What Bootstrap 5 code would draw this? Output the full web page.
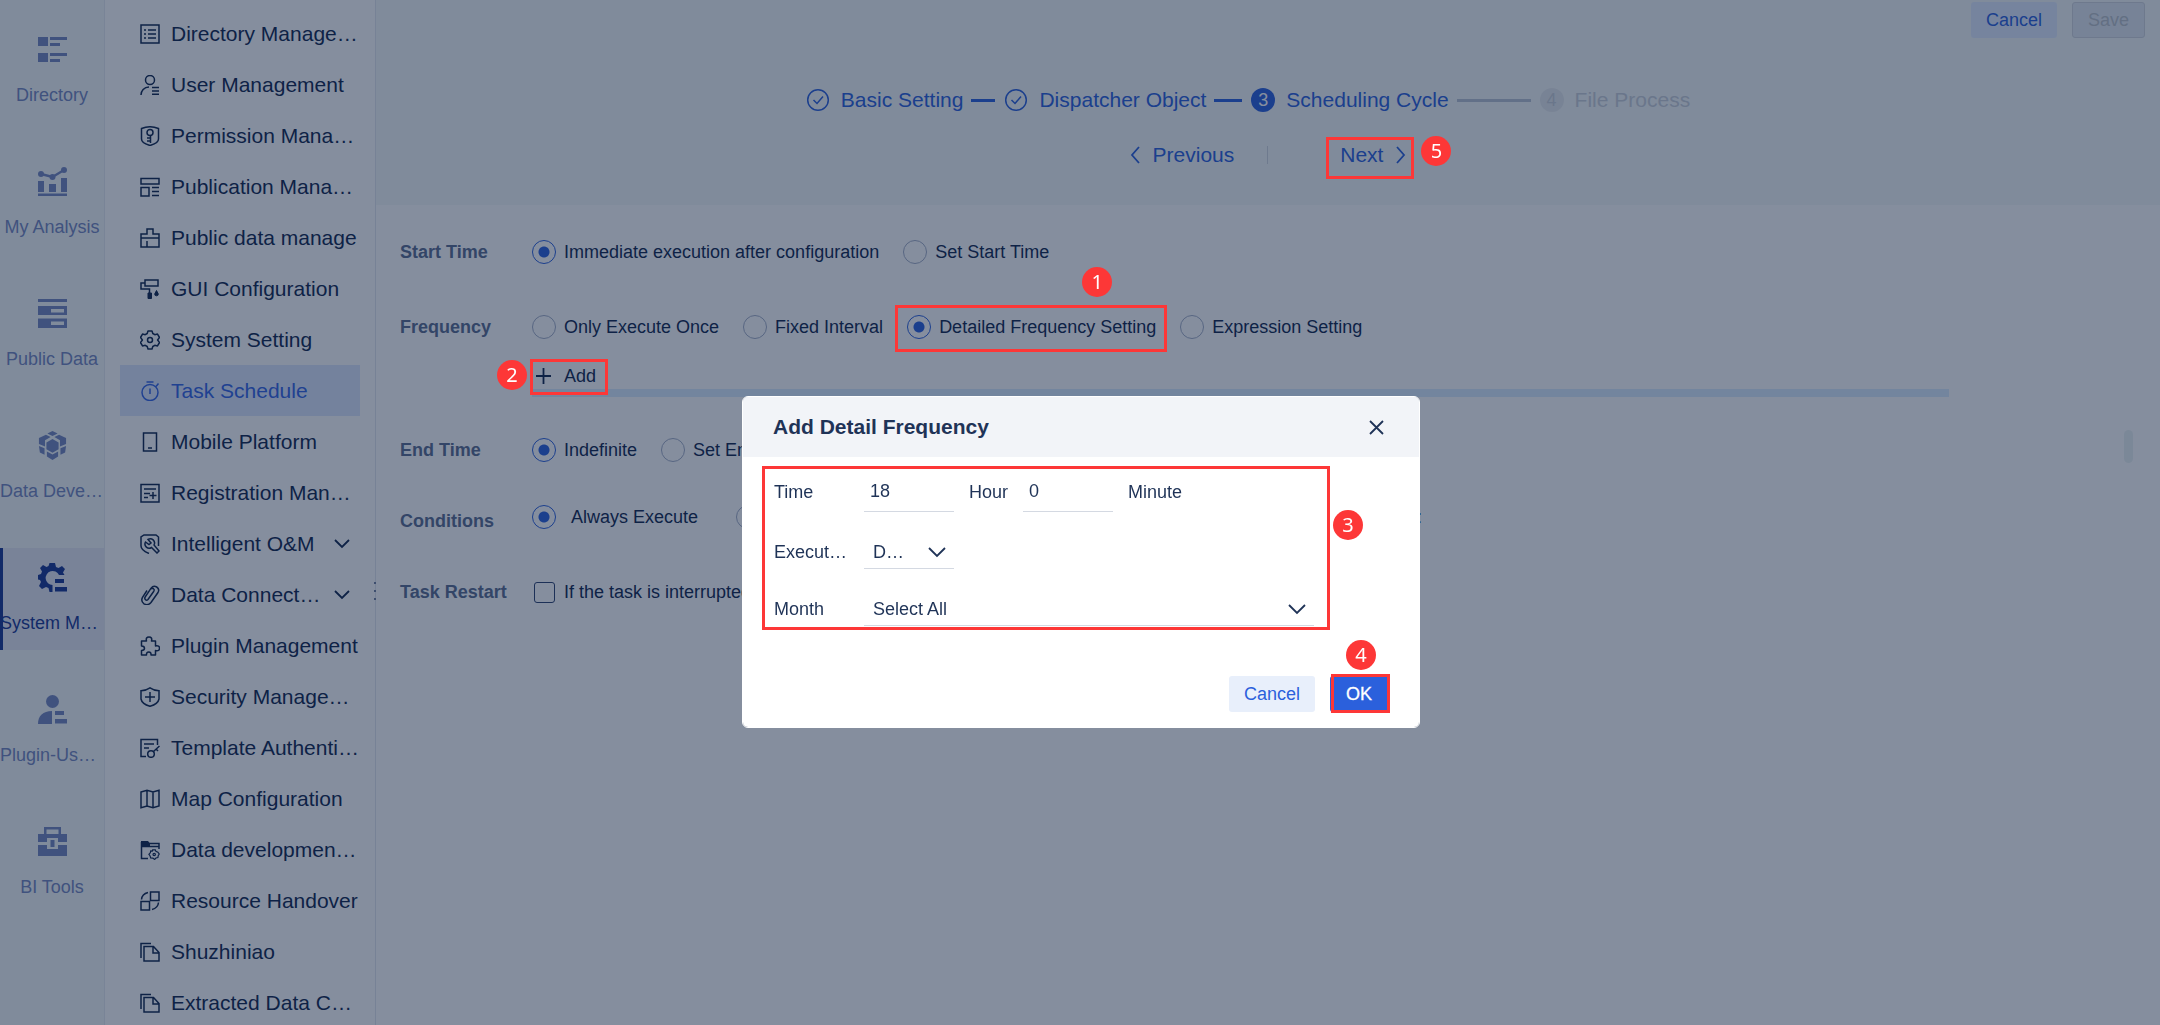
<!DOCTYPE html>
<html lang="en">
<head>
<meta charset="utf-8">
<meta name="viewport" content="width=device-width, initial-scale=1">
<title>Task Schedule</title>
<link href="https://cdn.jsdelivr.net/npm/bootstrap@5.3.0/dist/css/bootstrap.min.css" rel="stylesheet">
<style>
:root{--ink:#10274f;--primary:#2b60dc;--alert:#fd3737}
body{font-family:"Liberation Sans",Arial,sans-serif;font-size:18px;line-height:24px;color:var(--ink);background:#fff}
a{color:inherit;text-decoration:none}
svg{display:block;flex:none}
.line-ico{fill:none;stroke:currentColor;stroke-width:1.5}
.bold-ico{stroke-width:1.8}
/* left rail */
.rail{width:105px;padding-top:20px;gap:30px;background:#f5f9f9;border-right:1px solid #e6ebf0}
.rail-item{height:102px;padding-top:15px;gap:19px;color:#7587bf}
.rail-item.active{background:#e6e9f3;box-shadow:inset 3px 0 0 #193793;color:#193793}
.rail-item svg{fill:currentColor}
.rail-item .cut{align-self:flex-start}
/* secondary menu */
.side{width:271px;padding:8px 15px 0 15px;border-right:1px solid #e2e6ee}
.side-item{height:51px;padding-left:20px;padding-right:10px;gap:11px;font-size:21px;line-height:26px}
.side-item.active{background:#dde7fd;color:#3464e4}
.grip{right:-1px;top:582px;width:2px;gap:6px}
.grip i{width:2px;height:2px;background:#6f7e9e}
/* header */
.head{height:205px;background:#f5f9f9}
.head-actions{padding:2px 15px 0 0;gap:15px}
.btn-flat{height:36px;padding:0 15px;border:0;border-radius:3px;font-size:18px;line-height:34px}
.btn-soft{background:#e8effb;color:var(--primary)}
.head .btn-soft{background:#e1ebff}
.btn-off{background:#e3e9f1!important;border:1px solid #d0d5dc!important;color:#bac1c8!important;opacity:1!important;line-height:32px}
.steps{margin-top:49px;padding-right:40px;font-size:21px;line-height:26px;color:var(--primary)}
.step-txt{margin-left:11px}
.step-bar{height:3px;margin:0 9px 0 8px;background:var(--primary)}
.step-num{width:24px;height:24px;border-radius:50%;background:var(--primary);color:#fff;font-size:18px;line-height:24px}
.step-off{color:#c9cfd8}
.step-off .step-num{background:#e5e9ec;color:#c9cfd8}
.pager{margin-top:26px;height:32px;font-size:21px;line-height:26px;color:var(--primary)}
.pager button{gap:13px;font-size:inherit;line-height:26px}
.pager .split{width:1px;height:18px;margin:0 72px 0 33px;background:#d0d6de}
.frame-next{inset:-5px -8px -11px -14px}
.pin-next{right:-45px;top:-6px}
/* form */
.sheet{padding:35px 24px 0 24px}
.f-row{height:24px}
.f-name{width:132px;font-weight:700;color:#5a6c90}
.gap-a{margin-top:51px}
.gap-b{margin-top:41px}
.gap-c{margin-top:43px}
.opt{gap:8px;margin-right:24px}
.opt input{appearance:none;width:24px;height:24px;margin:0;border:1px solid #a3aec6;border-radius:50%;background:#fff;flex:none}
.opt input:checked{border-color:var(--primary);background:radial-gradient(circle,var(--primary) 5px,#fff 6px)}
.opt input[type=checkbox]{width:21px;height:21px;margin:0 1px 0 2px;border-color:#2c4270;border-radius:3px}
.opt-wide{gap:15px;margin-right:38px}
.opt-long{width:686px;margin:0}
.add-row{margin:25px 0 0 132px}
.add-btn{gap:13px;font-size:18px;line-height:24px;padding:0 0 0 4px}
.frame-add{inset:-5px -12px -7px -2px}
.pin-add{left:-35px;top:-4px}
.frame-freq{inset:-10px 13px -13px -12px}
.pin-freq{left:175px;top:-48px}
.strip{width:1417px;max-width:82%;height:8px;margin:1px 0 0 132px;background:#dbedff}
.thumb{right:27px;top:430px;width:9px;height:33px;border-radius:5px;background:#ebf3f3}
/* numbered marks */
.frame{border:3px solid var(--alert);z-index:1060;pointer-events:none}
.pin{width:30px;height:30px;border-radius:50%;background:var(--alert);color:#fff;z-index:1061;font:20px/29px "Noto Sans",sans-serif;text-align:center}
/* dialog */
.shade{background:#0b1d3d;opacity:.5}
.dlg{padding-left:2px}
.dlg .modal-dialog{max-width:678px;margin-top:396px}
.dlg .modal-content{border:1px solid #fff;border-radius:6px;color:#1f3357}
.dlg .modal-header{height:60px;padding:0 35px 0 30px;border:0;border-radius:5px 5px 0 0;background:#f2f4f8}
.dlg .modal-title{font-size:21px;line-height:26px;font-weight:700}
.dlg .modal-body{padding:9px 89px 0 19px}
.fields{padding:5px 16px 1px 12px}
.fields .cap{width:90px}
.time-row{height:41px}
.pick-row{height:34px;margin-top:23px}
.unit{padding-left:15px}
.unit-hour{width:69px}
.fields .box{border:0;border-bottom:1px solid #d4d9e2;border-radius:0;background-color:transparent;color:inherit;outline:0;padding:0 6px;width:90px;height:41px}
.fields select.box{appearance:none;padding-left:9px;height:34px;background:url("data:image/svg+xml,%3Csvg xmlns='http://www.w3.org/2000/svg' width='18' height='12' fill='none' stroke='%231f3357' stroke-width='1.8'%3E%3Cpath d='M1 2l8 8 8-8'/%3E%3C/svg%3E") no-repeat right 8px center}
.frame-fields{inset:0 0 -3px 0}
.pin-fields{right:-33px;top:44px}
.dlg .modal-footer{padding:49px 31px 15px;border:0;gap:15px}
.dlg .modal-footer>*{margin:0}
.btn-ok{width:58px;background:var(--primary);color:#fff;-webkit-text-stroke:.3px #fff}
.frame-ok{inset:-2px -2px -1px 1px}
.pin-ok{left:16px;top:-36px}
</style>
</head>
<body>
<div class="d-flex vh-100 overflow-hidden">

<nav class="rail d-flex flex-column flex-shrink-0" aria-label="Modules">
 <a class="rail-item d-flex flex-column align-items-center text-nowrap" href="#"><svg width="29" height="29"><path d="M0 2h10v9H0zM12 2h17v3H12zM12 8h10v3H12zM0 18h10v9H0zM12 18h17v3H12zM12 24h10v3H12z"/></svg><span>Directory</span></a>
 <a class="rail-item d-flex flex-column align-items-center text-nowrap" href="#"><svg width="29" height="29"><path d="M0 14h6v11H0zM11 17h7v8h-7zM23 11h6v14h-6zM0 26.500h29V29H0z"/><path d="M3 7l11.500 3L26 3" fill="none" stroke="currentColor" stroke-width="2.400"/><circle cx="3" cy="7" r="3"/><circle cx="14.500" cy="10" r="3"/><circle cx="26" cy="3" r="3"/></svg><span>My Analysis</span></a>
 <a class="rail-item d-flex flex-column align-items-center text-nowrap" href="#"><svg width="29" height="29"><path fill-rule="evenodd" d="M0 0h29v3H0zM0 7h29v9H0zM13 10v3.500h13V10zM0 19.500h29V29H0zM13 22.500V26h13v-3.500z"/></svg><span>Public Data</span></a>
 <a class="rail-item d-flex flex-column align-items-center text-nowrap" href="#"><svg width="29" height="29" viewBox="0 0 29 31"><path d="M14.500 0l5.500 2.700-5.500 2.700L9 2.700zM7.500 4l5 2.500L6.500 10v6.500L0 14V7.500zM21.500 4L29 7.500V14l-6.500 2.500V10l-6-3.500zM14.500 8.500l6.500 3.700v7.300l-6.500 3.700L8 19.500v-7.300zM0 16l6 2.500v6.800L1 23zM29 16l-6 2.500v6.800l5-2.300zM8.500 22l6 3 6-3v5.200L14.500 31l-6-3.800z"/></svg><span class="cut">Data Deve…</span></a>
 <a class="rail-item active d-flex flex-column align-items-center text-nowrap" href="#" aria-current="page"><svg width="29" height="29"><path d="M11.500 0h5.500l1 4 2.500 1 3.500-2 3 3-2 3.500 1.500 2.500H21a7 7 0 1 0-6.500 10v7h-3l-1-4-2.500-1L4 26l-3-3 2-4-1-2-2-.5V12l3-1 1-2.500L2 5l3-3 3.500 2 2-1zM17 16h9v4h-9zM17 24h12v4.500H17z"/></svg><span class="cut">System M…</span></a>
 <a class="rail-item d-flex flex-column align-items-center text-nowrap" href="#"><svg width="29" height="29"><circle cx="14.500" cy="6.500" r="6.500"/><path d="M0 29c0-8 5-13 14-13v13zM17 16h9v4h-9zM17 24h12v4.500H17z"/></svg><span class="cut">Plugin-Us…</span></a>
 <a class="rail-item d-flex flex-column align-items-center text-nowrap" href="#"><svg width="29" height="29"><path fill-rule="evenodd" d="M6 0h17v7h6v8h-9v-4H9v4H0V7h6zM8.500 2.500V7h12V2.500zM0 18h9v4h11v-4h9v11H0zM12.500 13h4v7h-4z"/></svg><span>BI Tools</span></a>
</nav>

<nav class="side flex-shrink-0 position-relative" aria-label="System management">
 <a class="side-item d-flex align-items-center text-nowrap" href="#"><svg class="line-ico" width="20" height="20"><path d="M1 1h18v18H1zM4 6h2M8 6h8M4 10h2M8 10h8M4 14h2M8 14h8"/></svg>Directory Manage…</a>
 <a class="side-item d-flex align-items-center text-nowrap" href="#"><svg class="line-ico" width="20" height="20"><circle cx="10" cy="5" r="4.500"/><path d="M1 20c0-4 3-8 8-8M12 12.500h7M12 16h7M12 19.300h7"/></svg>User Management</a>
 <a class="side-item d-flex align-items-center text-nowrap" href="#"><svg class="line-ico" width="20" height="20"><path d="M1.500 2.500Q10-1 18.500 2.500V13q0 4-8.500 6.500Q1.500 17 1.500 13z"/><circle cx="10" cy="6.500" r="3"/><path d="M10.500 9.500V17M7 12h3.500M7 15h3.500"/></svg>Permission Mana…</a>
 <a class="side-item d-flex align-items-center text-nowrap" href="#"><svg class="line-ico" width="20" height="20"><path d="M1 1.500h18V7H1zM1 10.500h8V19H1zM12 10.500h7M12 14.500h7M12 18.500h7"/></svg>Publication Mana…</a>
 <a class="side-item d-flex align-items-center text-nowrap" href="#"><svg class="line-ico" width="20" height="20"><path d="M1 6h6V1h6v5h6v13H1zM1 10h18M7 13v6"/></svg>Public data manage</a>
 <a class="side-item d-flex align-items-center text-nowrap" href="#"><svg class="line-ico" width="20" height="20"><path d="M5 1h13v6H5zM5 4H1v6h8.500v4"/><path d="M8 14h3.500v5.500H8zM16.500 11.500l1.800 3.500a1.800 1.800 0 1 1-3.600 0z" fill="currentColor" stroke-width="1"/></svg>GUI Configuration</a>
 <a class="side-item d-flex align-items-center text-nowrap" href="#"><svg class="line-ico" width="20" height="20"><path d="M8 1h4l.8 2.500 2 1.200 2.700-.6 2 3.400-1.900 2.500 1.900 2.500-2 3.400-2.700-.6-2 1.200L12 19H8l-.8-2.500-2-1.200-2.700.6-2-3.400L2.400 10 .5 7.500l2-3.400 2.700.6 2-1.200z" stroke-linejoin="round"/><circle cx="10" cy="10" r="2.500"/></svg>System Setting</a>
 <a class="side-item active d-flex align-items-center text-nowrap" href="#" aria-current="page"><svg class="line-ico" width="20" height="20"><circle cx="10" cy="11.500" r="8"/><path d="M6.500 1h7M10 7.500V13M16 5.500l2.500-3"/></svg>Task Schedule</a>
 <a class="side-item d-flex align-items-center text-nowrap" href="#"><svg class="line-ico" width="20" height="20"><path d="M3.500 1h13v18h-13zM8 16h4"/></svg>Mobile Platform</a>
 <a class="side-item d-flex align-items-center text-nowrap" href="#"><svg class="line-ico" width="20" height="20"><path d="M1 1.500h18V19H1zM4 6h12M4 10.500h6M4 14.500h4M13 9v7M9.500 12.500h7"/></svg>Registration Man…</a>
 <a class="side-item d-flex align-items-center text-nowrap" href="#"><svg class="line-ico" width="20" height="20"><path d="M9 19.500Q1 16 1 12V3l3-2h12l2.500 2v9M8 5.500a4.200 4.200 0 0 1 6 5.500l5 6-2 2-5.500-5.500A4.200 4.200 0 0 1 5.500 8L9 10.500 11 9z"/></svg><span class="flex-grow-1">Intelligent O&amp;M</span><svg class="line-ico bold-ico" width="16" height="10"><path d="M1 1l7 7 7-7"/></svg></a>
 <a class="side-item d-flex align-items-center text-nowrap" href="#"><svg class="line-ico" width="20" height="20"><path d="M14 6l-6 8.500q-1.300 1.300-2.500.2t-.4-2.600l6-9Q13.500 0 16.700 2t1.300 5.500l-7 10q-3 3.500-7 1.300-3.500-2.600-1.500-6.500L7 5.500"/><path d="M14 6q.7-1.500-.6-2.300T11 4"/></svg><span class="flex-grow-1">Data Connect…</span><svg class="line-ico bold-ico" width="16" height="10"><path d="M1 1l7 7 7-7"/></svg></a>
 <a class="side-item d-flex align-items-center text-nowrap" href="#"><svg class="line-ico" width="20" height="20"><path d="M1.500 5h5q-1-4 2.500-4t2.500 4h4v5q4-.8 4 2.300T15.500 14.500V19h-4.500q.3-3-2.200-3T6.500 19h-5v-4.500q3 0 3-2.200T1.500 10z" stroke-linejoin="round"/></svg>Plugin Management</a>
 <a class="side-item d-flex align-items-center text-nowrap" href="#"><svg class="line-ico" width="20" height="20"><path d="M10 .8Q14 3.500 19 3.800V12q-1 5-9 7.300Q2 17 1 12V3.800Q6 3.500 10 .8zM10 5v10M5 10h10"/></svg>Security Manage…</a>
 <a class="side-item d-flex align-items-center text-nowrap" href="#"><svg class="line-ico" width="20" height="20"><path d="M6 18.500H1v-17h16.500V7M4 6h10M4 10h5"/><circle cx="11" cy="16" r="3.300"/><path d="M13.500 13.500L19.500 8M16 11l2 2"/></svg>Template Authenti…</a>
 <a class="side-item d-flex align-items-center text-nowrap" href="#"><svg class="line-ico" width="20" height="20"><path d="M1 3l6-1.800 6 1.800 6-1.800V17l-6 1.800L7 17l-6 1.800zM7 1v16M13 3v16"/></svg>Map Configuration</a>
 <a class="side-item d-flex align-items-center text-nowrap" href="#"><svg class="line-ico" width="20" height="20"><path d="M8 18.500H1.500V2M1 6.500h18V9M9 3.500h10v3"/><path d="M1 1h7l2 2.500V6H1z" fill="currentColor" stroke="none"/><path d="M12.700 9.800h2.600l.6 1.600 2 .8 1.300 1.800-1 1.600-.3 2-2 .4-1.200 1.400-1.800-1.200-2.200-.2-.6-2-1.200-1.600 1.400-1.600.4-2 1.600.2z" stroke-width="1.200"/><circle cx="14.200" cy="14.500" r="1.200" stroke-width="1.200"/></svg>Data developmen…</a>
 <a class="side-item d-flex align-items-center text-nowrap" href="#"><svg class="line-ico" width="20" height="20"><path d="M10.500 1H19v8.500h-8.500zM1 10.500h8.500V19H1zM1.500 8.500Q2 3 8 1.500M18.500 11.500Q18 17 12 18.500"/></svg>Resource Handover</a>
 <a class="side-item d-flex align-items-center text-nowrap" href="#"><svg class="line-ico" width="20" height="20"><path d="M1 16V1.500h10M4 4.500h9.500l5.500 6V19H4zM13 5v6h6"/></svg>Shuzhiniao</a>
 <a class="side-item d-flex align-items-center text-nowrap" href="#"><svg class="line-ico" width="20" height="20"><path d="M1 16V1.500h10M4 4.500h9.500l5.500 6V19H4zM13 5v6h6"/></svg>Extracted Data C…</a>
 <div class="grip position-absolute d-flex flex-column"><i></i><i></i><i></i></div>
</nav>

<main class="flex-grow-1 position-relative">
 <header class="head">
  <div class="head-actions d-flex justify-content-end">
   <button class="btn btn-flat btn-soft" type="button">Cancel</button>
   <button class="btn btn-flat btn-off" type="button" disabled>Save</button>
  </div>
  <div class="steps d-flex justify-content-center align-items-center text-nowrap">
   <svg class="line-ico" width="24" height="24"><circle cx="12" cy="12" r="10.300"/><path d="M7.500 12l3.500 3.500 6-7"/></svg><span class="step-txt">Basic Setting</span>
   <span class="step-bar" style="width:24px"></span>
   <svg class="line-ico" width="24" height="24"><circle cx="12" cy="12" r="10.300"/><path d="M7.500 12l3.500 3.500 6-7"/></svg><span class="step-txt">Dispatcher Object</span>
   <span class="step-bar" style="width:28px"></span>
   <span class="step-num text-center">3</span><span class="step-txt">Scheduling Cycle</span>
   <span class="step-bar" style="width:74px;background:#b9c2d2"></span>
   <span class="step-off d-flex align-items-center"><span class="step-num text-center">4</span><span class="step-txt">File Process</span></span>
  </div>
  <div class="pager d-flex justify-content-center align-items-center">
   <button type="button" class="btn border-0 p-0 d-flex align-items-center text-reset"><svg class="line-ico bold-ico" width="10" height="18"><path d="M9 1L2 9l7 8"/></svg>Previous</button>
   <span class="split"></span>
   <div class="position-relative">
    <button type="button" class="btn border-0 p-0 d-flex align-items-center text-reset">Next<svg class="line-ico bold-ico" width="10" height="18"><path d="M1 1l7 8-7 8"/></svg></button>
    <span class="frame frame-next position-absolute"></span>
    <span class="pin pin-next position-absolute">5</span>
   </div>
  </div>
 </header>

 <form class="sheet text-nowrap">
  <div class="f-row d-flex align-items-center"><span class="f-name">Start Time</span>
   <label class="opt d-flex align-items-center"><input type="radio" name="start" checked>Immediate execution after configuration</label>
   <label class="opt d-flex align-items-center"><input type="radio" name="start">Set Start Time</label>
  </div>
  <div class="f-row gap-a d-flex align-items-center"><span class="f-name">Frequency</span>
   <label class="opt d-flex align-items-center"><input type="radio" name="freq">Only Execute Once</label>
   <label class="opt d-flex align-items-center"><input type="radio" name="freq">Fixed Interval</label>
   <div class="position-relative">
    <label class="opt d-flex align-items-center"><input type="radio" name="freq" checked>Detailed Frequency Setting</label>
    <span class="frame frame-freq position-absolute"></span>
    <span class="pin pin-freq position-absolute">1</span>
   </div>
   <label class="opt d-flex align-items-center"><input type="radio" name="freq">Expression Setting</label>
  </div>
  <div class="add-row d-flex">
   <div class="position-relative">
    <button type="button" class="btn add-btn border-0 d-flex align-items-center text-reset"><svg class="line-ico bold-ico" width="15" height="16"><path d="M7.500 0v16M0 8h15"/></svg>Add</button>
    <span class="frame frame-add position-absolute"></span>
    <span class="pin pin-add position-absolute">2</span>
   </div>
  </div>
  <div class="strip"></div>
  <div class="f-row gap-b d-flex align-items-center"><span class="f-name">End Time</span>
   <label class="opt d-flex align-items-center"><input type="radio" name="end" checked>Indefinite</label>
   <label class="opt d-flex align-items-center"><input type="radio" name="end">Set End Time</label>
  </div>
  <div class="f-row gap-c d-flex align-items-center"><span class="f-name pt-2">Conditions</span>
   <label class="opt opt-wide d-flex align-items-center"><input type="radio" name="cond" checked>Always Execute</label>
   <label class="opt opt-long d-flex align-items-center justify-content-between"><input type="radio" name="cond"><span>:</span></label>
  </div>
  <div class="f-row gap-a d-flex align-items-center"><span class="f-name">Task Restart</span>
   <label class="opt d-flex align-items-center"><input type="checkbox">If the task is interrupted</label>
  </div>
 </form>
 <div class="thumb position-absolute"></div>
</main>
</div>

<div class="modal-backdrop shade"></div>
<div class="modal dlg d-block" role="dialog" aria-modal="true" aria-labelledby="dlgTitle">
 <div class="modal-dialog mb-0">
  <div class="modal-content">
   <div class="modal-header">
    <h1 class="modal-title" id="dlgTitle">Add Detail Frequency</h1>
    <button type="button" class="btn border-0 p-0 text-reset" aria-label="Close"><svg class="line-ico bold-ico" width="15" height="15"><path d="M1 1l13 13M14 1L1 14"/></svg></button>
   </div>
   <div class="modal-body">
    <div class="fields position-relative">
     <div class="time-row d-flex align-items-center">
      <label class="cap" for="hour">Time</label><input class="box" id="hour" value="18"><label class="unit unit-hour" for="hour">Hour</label><input class="box" id="minute" value="0" aria-label="Minute"><label class="unit" for="minute">Minute</label>
     </div>
     <div class="pick-row d-flex align-items-center">
      <label class="cap" for="cycle">Execut…</label><select class="box" id="cycle"><option>D…</option></select>
     </div>
     <div class="pick-row d-flex align-items-center">
      <label class="cap" for="month">Month</label><select class="box flex-grow-1" id="month"><option>Select All</option></select>
     </div>
     <span class="frame frame-fields position-absolute"></span>
     <span class="pin pin-fields position-absolute">3</span>
    </div>
   </div>
   <div class="modal-footer">
    <button type="button" class="btn btn-flat btn-soft">Cancel</button>
    <div class="position-relative">
     <button type="button" class="btn btn-flat btn-ok p-0">OK</button>
     <span class="frame frame-ok position-absolute"></span>
     <span class="pin pin-ok position-absolute">4</span>
    </div>
   </div>
  </div>
 </div>
</div>
<script src="https://cdn.jsdelivr.net/npm/bootstrap@5.3.0/dist/js/bootstrap.bundle.min.js"></script>
</body>
</html>
